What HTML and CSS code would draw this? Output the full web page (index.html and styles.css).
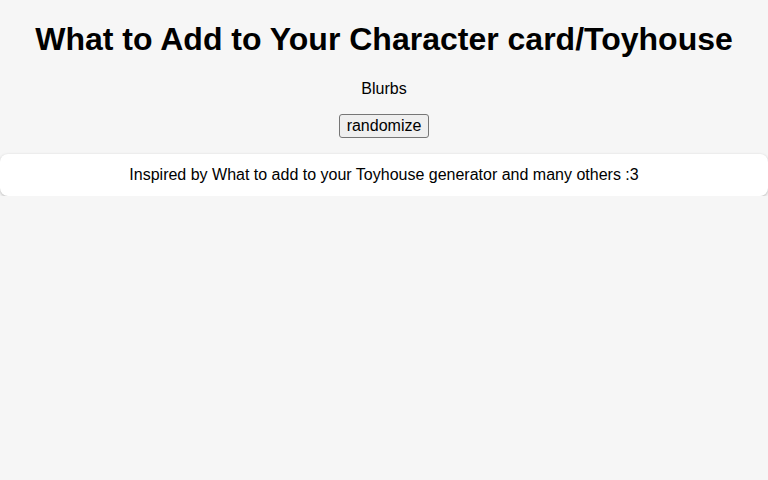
FILE: index.html
```html
<!DOCTYPE html>
<html>
<head>
<meta charset="utf-8">
<link rel="stylesheet" href="styles.css">
</head>
<body>
<h1 class="title">What to Add to Your Character card/Toyhouse</h1>
<p class="label">Blurbs</p>
<p class="actions"><button class="btn">randomize</button></p>
<div class="card">Inspired by What to add to your Toyhouse generator and many others :3</div>
</body>
</html>
```
FILE: styles.css
```css
html, body {
  margin: 0;
  background: #f6f6f6;
  font-family: "Liberation Sans", Arial, sans-serif;
  color: #000;
  text-align: center;
}
.title {
  font-size: 32px;
  font-weight: bold;
  margin: 21.44px 0;
  line-height: 37px;
}
.label {
  font-size: 16px;
  line-height: 18px;
  margin: 16px 0;
}
.actions {
  margin: 16px 0;
  display: flex;
  justify-content: center;
}
.btn {
  font-family: "Liberation Sans", Arial, sans-serif;
  font-size: 16px;
  line-height: 18px;
  padding: 2px 7px;
  border: 1px solid #767676;
  border-radius: 3px;
  background: #efefef;
  color: #000;
}
.card {
  background: #fff;
  border-radius: 8px;
  box-shadow: 0 1px 3px rgba(0,0,0,0.25);
  padding: 12px;
  font-size: 16px;
  line-height: 18px;
}
```
